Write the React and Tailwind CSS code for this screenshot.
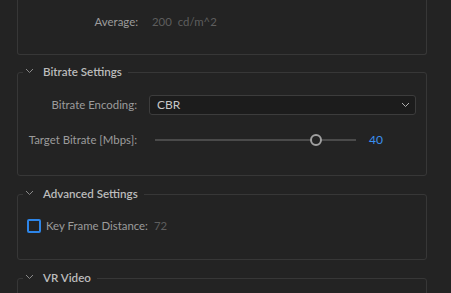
import React from 'react';

const Chevron = ({ className }) => (
  <svg className={className} width="9" height="6" viewBox="0 0 9 6" fill="none">
    <path d="M1 1l3.5 3.5L8 1" stroke="currentColor" strokeWidth="1" />
  </svg>
);

const Section = ({ title, className, children }) => (
  <fieldset className={`border border-[#373737] rounded-[3px] pl-0 ${className}`}>
    <legend className="ml-[5px] pr-[6px] flex items-center h-[16px]">
      <Chevron className="ml-[2px] mr-[9px] text-[#8a8a8a] -mt-[3px]" />
      <span className="font-semibold text-[#bcbcbc] text-[11.6px]">{title}</span>
    </legend>
    {children}
  </fieldset>
);

export default function App() {
  return (
    <div className="w-[451px] h-[293px] overflow-hidden bg-[#232323] font-['Lato',sans-serif] text-[11.4px] text-[#9c9c9c]">
      <div className="w-[410px] ml-[17px]">
        {/* top panel, continues above the view */}
        <div className="h-[55px] border-x border-b border-[#373737] rounded-b-[3px] flex items-start pt-[13px]">
          <div className="w-[120px] text-right">Average:</div>
          <div className="ml-[14px] text-[#5e5e5e]">200&nbsp;&nbsp;cd/m^2</div>
        </div>

        <Section title="Bitrate Settings" className="mt-[9px] h-[112px]">
          <div className="flex items-center mt-[15px]">
            <div className="w-[119px] text-right">Bitrate Encoding:</div>
            <div className="ml-[12px] w-[267px] h-[20px] bg-[#1c1c1c] border border-[#3c3c3c] rounded-[3px] flex items-center justify-between pl-[7px] pr-[5px]">
              <span className="text-[#c8c8c8] text-[12px]">CBR</span>
              <Chevron className="text-[#b0b0b0]" />
            </div>
          </div>
          <div className="flex items-center mt-[16px]">
            <div className="w-[119px] text-right">Target Bitrate [Mbps]:</div>
            <div className="ml-[18px] w-[201px] relative h-[12px] flex items-center">
              <div className="w-full h-[2px] bg-[#4a4a4a]" />
              <div className="absolute left-[161px] top-0 w-[12px] h-[12px] rounded-full border-2 border-[#a0a0a0] bg-[#232323] -translate-x-1/2" />
            </div>
            <div className="ml-[13px] text-[#3a8ff0] text-[12px]">40</div>
          </div>
        </Section>

        <Section title="Advanced Settings" className="mt-[10px] h-[74px]">
          <div className="flex items-center mt-[15px] pl-[9px]">
            <div className="w-[14px] h-[14px] border-2 border-[#2d85e8] rounded-[2px]" />
            <div className="ml-[5px]">Key Frame Distance:</div>
            <div className="ml-[6px] text-[#5e5e5e]">72</div>
          </div>
        </Section>

        <Section title="VR Video" className="mt-[10px] h-[40px]" />
      </div>
    </div>
  );
}
